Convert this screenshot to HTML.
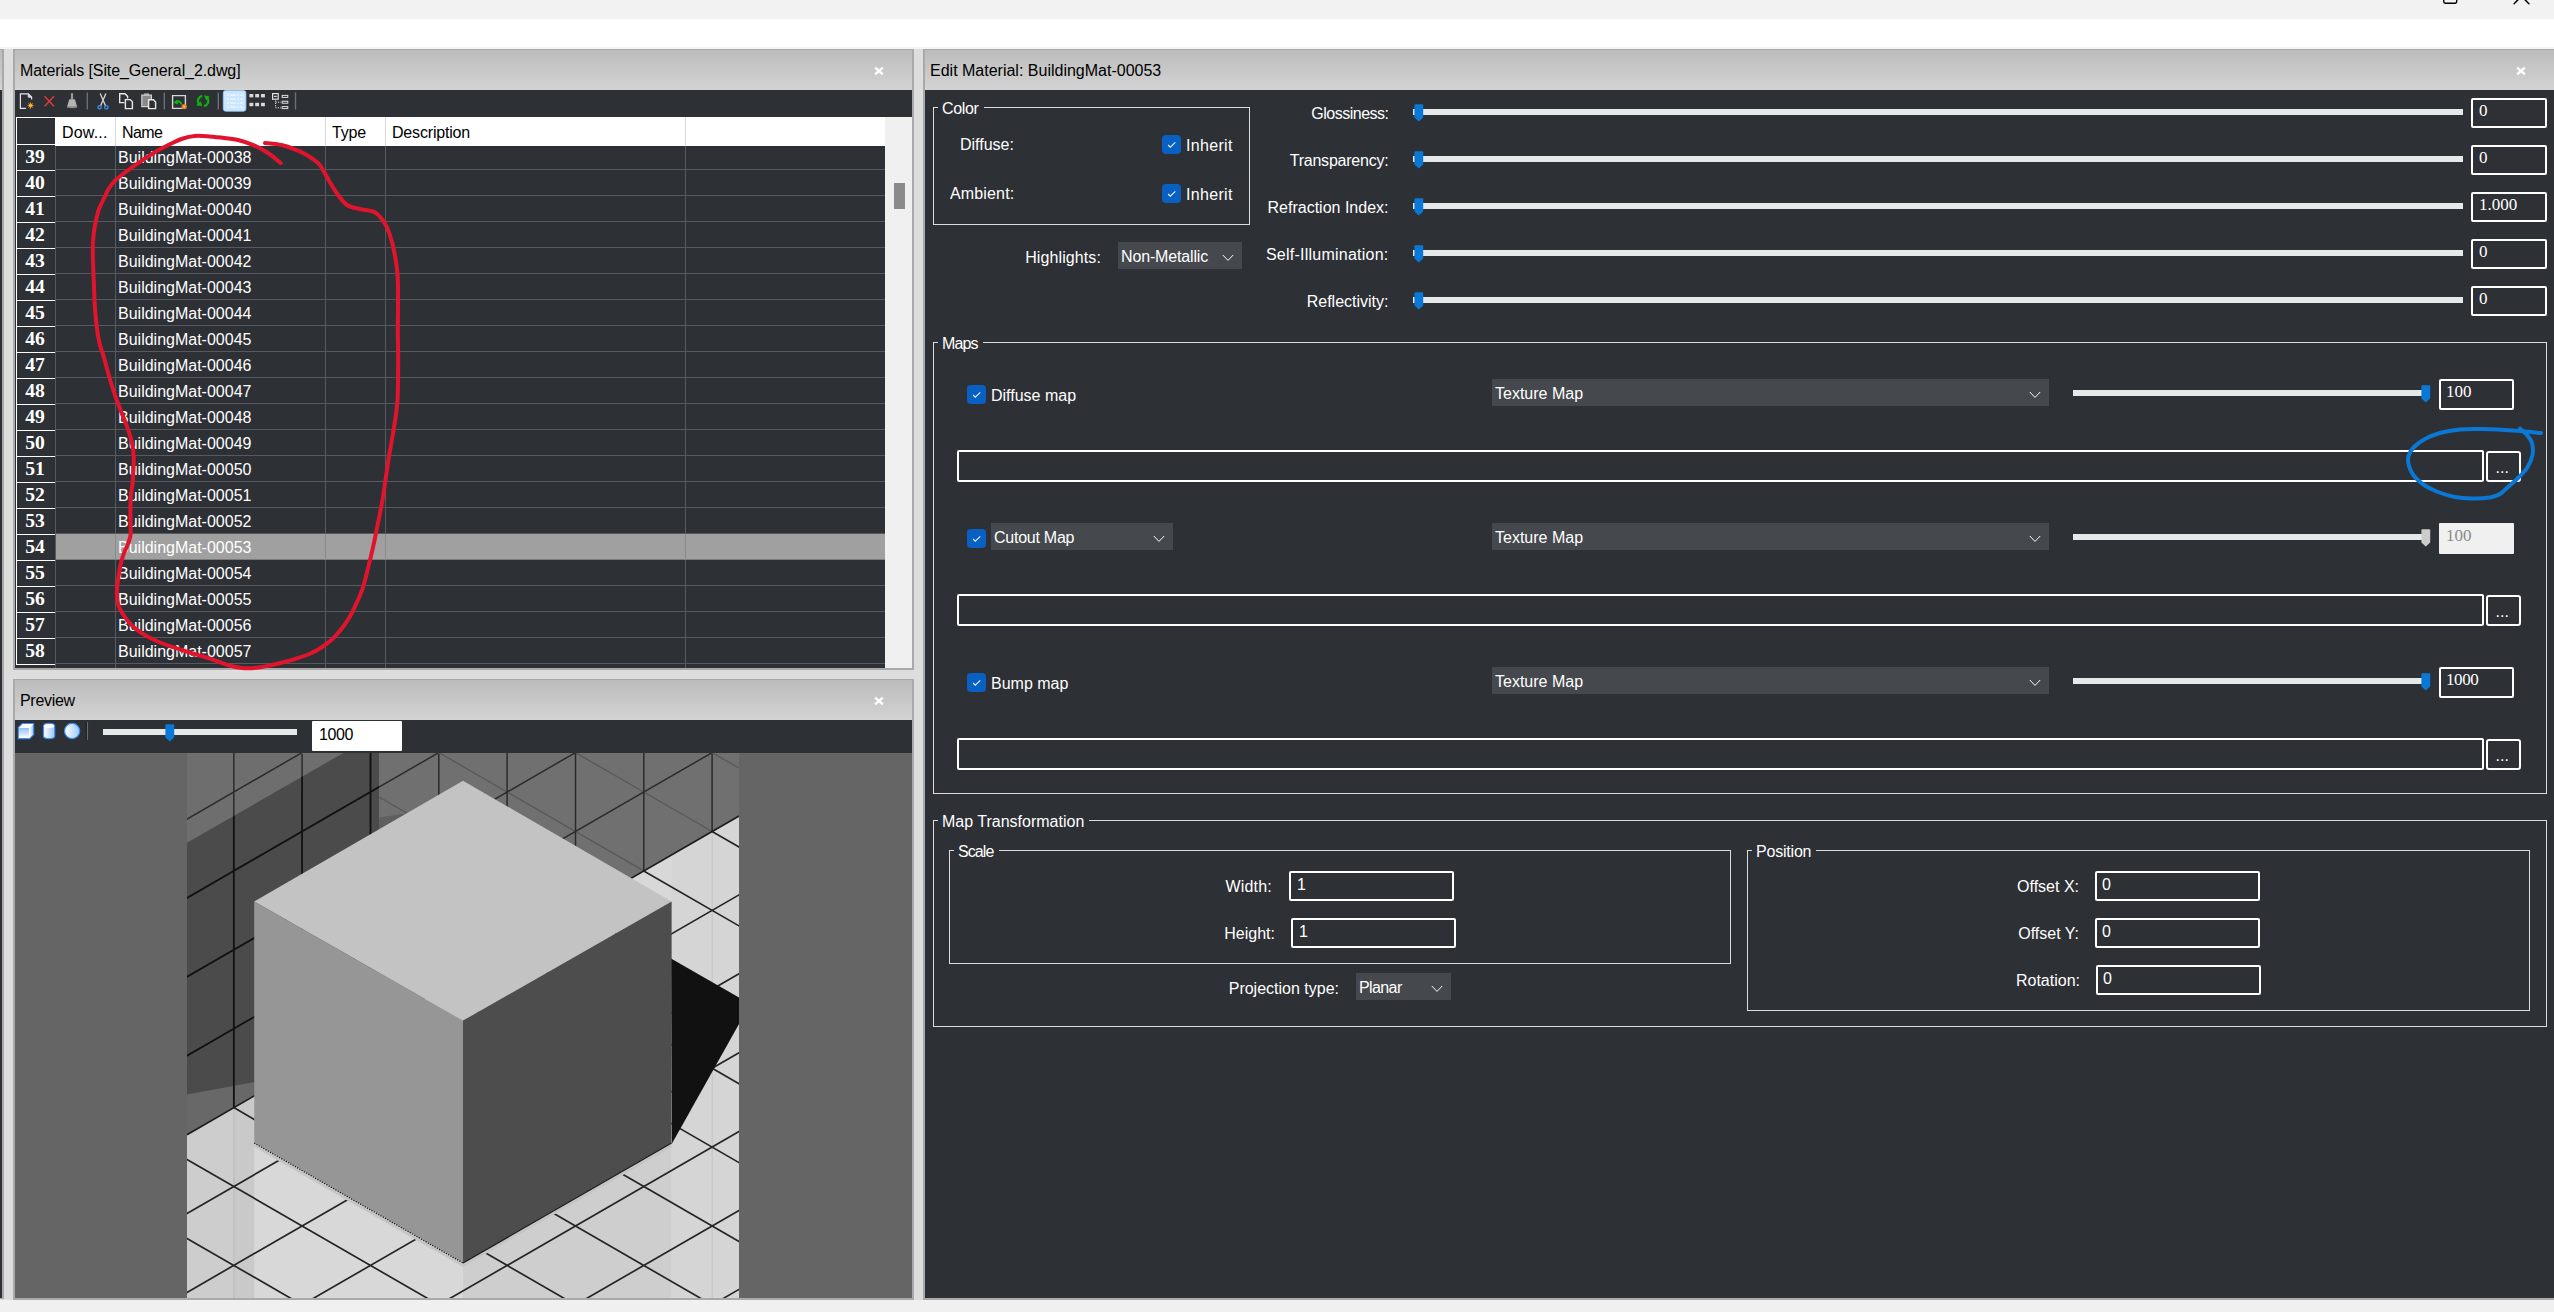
<!DOCTYPE html>
<html lang="en"><head><meta charset="utf-8"><title>Edit Material</title>
<style>
html,body{margin:0;padding:0}
body{width:2554px;height:1312px;position:relative;overflow:hidden;background:#dddddd;font-family:"Liberation Sans",sans-serif;font-size:16px;color:#fff}
div{position:absolute;box-sizing:border-box}
svg{position:absolute;overflow:visible}
.t{white-space:nowrap;line-height:20px;height:20px}
.k{color:#000}
.s{font-family:"Liberation Serif",serif;font-size:17px}
.rn{font-family:"Liberation Serif",serif;font-weight:bold;font-size:18px;transform:scaleX(1.09);text-align:center;white-space:nowrap;line-height:20px;height:20px;width:38px}
.title{background:linear-gradient(#bcbcbc,#d3d3d3)}
.fs{border:1px solid #dcdcdc}
.lg{background:#2d3035;padding:0 5px 0 4px;white-space:nowrap;line-height:20px;height:20px}
.in{border:2px solid #fff;background:#2d3035;border-radius:2px}
.dd{background:#45484d}
.trk{background:#e6e9e9;height:6px}
.cb{background:#0860c2;border-radius:4px;width:19px;height:19px}
</style></head><body>

<div style="left:0px;top:0px;width:2554px;height:19px;background:#f2f2f2"></div>
<div style="left:0px;top:19px;width:2554px;height:29px;background:#fff"></div>
<div style="left:0px;top:47px;width:2554px;height:2px;background:#f4f4f4"></div>
<svg style="left:2440px;top:0" width="100" height="8" viewBox="0 0 100 8"><rect x="3.7" y="-8" width="13" height="11.2" rx="1.6" fill="none" stroke="#000" stroke-width="1.4"/><path d="M81.5 -3.7 L74.1 3.7 M81.5 -3.7 L88.9 3.7" fill="none" stroke="#000" stroke-width="1.5" stroke-linecap="round"/></svg>
<div style="left:0px;top:49px;width:4px;height:1250px;background:#a9a9a9"></div>
<div class="title" style="left:0px;top:50px;width:2px;height:40px;"></div>
<div style="left:0px;top:90px;width:2px;height:1208px;background:#2d3035"></div>
<div style="left:0px;top:1300px;width:2554px;height:12px;background:#f0f0f0"></div>
<div style="left:13px;top:49px;width:901px;height:621px;background:#a9a9a9"></div>
<div class="title" style="left:15px;top:50px;width:897px;height:40px;"></div>
<div class="t k" style="left:20px;top:61px;letter-spacing:-0.09px;">Materials [Site_General_2.dwg]</div>
<svg style="left:874px;top:65.5px" width="10" height="10" viewBox="0 0 10 10"><path d="M1.2 1.6 L8.8 8.4 M8.8 1.6 L1.2 8.4" stroke="#fff" stroke-width="2.3" fill="none"/></svg>
<div style="left:15px;top:90px;width:897px;height:27px;background:#2d3035"></div>
<div style="left:15px;top:117px;width:897px;height:551px;background:#2d3035"></div>
<div style="left:885px;top:117px;width:27px;height:551px;background:#f0f0f0"></div>
<div style="left:894px;top:183px;width:11px;height:26px;background:#8a8a8a"></div>
<svg style="left:15px;top:90px" width="300" height="27" viewBox="15 90 300 27">
<path d="M26 108.3 H20.4 V93.8 H28.4 L31.6 97 V99.6" fill="none" stroke="#dfe3ec" stroke-width="1.2"/><path d="M28.2 94 V97.2 H31.4 Z" fill="#cfd6e6" stroke="#dfe3ec" stroke-width="0.8"/>
<path d="M30.6 101.6 L31.3 104.3 L33.4 102.7 L32 104.9 L34.5 105.5 L32 106.1 L33.4 108.3 L31.3 106.8 L30.6 109.4 L29.9 106.8 L27.8 108.3 L29.2 106.1 L26.7 105.5 L29.2 104.9 L27.8 102.7 L29.9 104.3 Z" fill="#f2b232"/>
<path d="M44.6 96.3 L54 106.3 M54 96.3 L44.6 106.3" stroke="#e03a3a" stroke-width="1.5" fill="none"/>
<path d="M70.9 93.2 h2.2 v6.2 h-2.2 z" fill="#9a9a9a"/><path d="M69.3 99.2 h5.6 l2.3 7.8 q-5 1.6 -10.2 0 z" fill="#b4b4b4"/><path d="M67.2 105.8 q5 1.4 9.8 0 l0.3 1.6 q-5.2 1.6 -10.4 0 z" fill="#8a8a8a"/>
<path d="M87.3 92.5 V109.6" stroke="#6c6f74" stroke-width="1.4"/>
<path d="M164.3 92.5 V109.6" stroke="#6c6f74" stroke-width="1.4"/>
<path d="M218.3 92.5 V109.6" stroke="#6c6f74" stroke-width="1.4"/>
<path d="M295.5 92.5 V109.6" stroke="#6c6f74" stroke-width="1.4"/>
<path d="M100.2 93.6 L105.6 106 M105.9 93.6 L100.5 106" stroke="#d8d8d8" stroke-width="1.3" fill="none"/><circle cx="99.6" cy="107.3" r="1.7" fill="none" stroke="#3b8cf0" stroke-width="1.3"/><circle cx="106.4" cy="107.3" r="1.7" fill="none" stroke="#3b8cf0" stroke-width="1.3"/>
<path d="M124.4 102.6 H119.7 V93.8 H125 L127.6 96.4 V98.6" fill="none" stroke="#e8e8e8" stroke-width="1.4"/><path d="M125.4 99.6 H130.2 L132.4 101.8 V108.6 H125.4 Z" fill="none" stroke="#e8e8e8" stroke-width="1.4"/>
<path d="M141.8 95.2 H151.4 V106.6 H141.8 Z" fill="#8a8a8a" stroke="#d0d0d0" stroke-width="1.2"/><path d="M144.2 93.4 h4.8 v2.6 h-4.8 z" fill="#bdbdbd"/><path d="M148.6 99.8 H153.4 L155.6 102 V108.6 H148.6 Z" fill="#2d3035" stroke="#e8e8e8" stroke-width="1.4"/>
<path d="M172.6 95.6 H185.4 V108.4 H172.6 Z" fill="none" stroke="#d8d8d8" stroke-width="1.4"/><path d="M181.4 104.6 a3.6 3.6 0 0 0 -6 -2.4" fill="none" stroke="#0cb40c" stroke-width="2"/><path d="M173.2 102.8 l4.6 -3.2 l0.2 5 z" fill="#0cb40c"/><circle cx="184.2" cy="106.6" r="2.7" fill="#e8742a"/><circle cx="184.2" cy="106.6" r="1.1" fill="#ffd84a"/>
<path d="M202.2 95.9 A5.3 5.3 0 0 0 198.8 104" fill="none" stroke="#0cb40c" stroke-width="2.2"/><path d="M204 106.2 A5.3 5.3 0 0 0 207.6 98.2" fill="none" stroke="#0cb40c" stroke-width="2.2"/><path d="M196 105.4 L202.4 106 L200.6 101.2 Z" fill="#0cb40c"/><path d="M204 95.2 L209.6 96.6 L206.4 100.4 Z" fill="#0cb40c"/>
<rect x="223.3" y="90.6" width="22.6" height="20.6" rx="2.4" fill="#cbe6ff" stroke="#9fd0ff" stroke-width="0.8"/>
<path d="M227 95.1 h1.8 M230.2 95.1 h5.6 M237.2 95.1 h1.6 M240.2 95.1 h2.7" stroke="#e6f3ff" stroke-width="1.9"/>
<path d="M227 99.1 h1.8 M230.2 99.1 h5.6 M237.2 99.1 h1.6 M240.2 99.1 h2.7" stroke="#e6f3ff" stroke-width="1.9"/>
<path d="M227 103.1 h1.8 M230.2 103.1 h5.6 M237.2 103.1 h1.6 M240.2 103.1 h2.7" stroke="#e6f3ff" stroke-width="1.9"/>
<path d="M227 107.1 h1.8 M230.2 107.1 h5.6 M237.2 107.1 h1.6 M240.2 107.1 h2.7" stroke="#e6f3ff" stroke-width="1.9"/>
<rect x="249.4" y="94" width="3.9" height="3.4" fill="#d9d9d9"/>
<rect x="255.2" y="94" width="3.9" height="3.4" fill="#d9d9d9"/>
<rect x="261" y="94" width="3.9" height="3.4" fill="#d9d9d9"/>
<rect x="249.4" y="102.8" width="3.9" height="3.4" fill="#d9d9d9"/>
<rect x="255.2" y="102.8" width="3.9" height="3.4" fill="#d9d9d9"/>
<rect x="261" y="102.8" width="3.9" height="3.4" fill="#d9d9d9"/>
<rect x="272.6" y="93.6" width="5.6" height="5.6" fill="none" stroke="#e0e0e0" stroke-width="1.2"/><path d="M274 96.4 h2.8" stroke="#e0e0e0" stroke-width="1.1"/><rect x="282.2" y="95.4" width="5.6" height="2" fill="none" stroke="#e0e0e0" stroke-width="1"/><rect x="282.2" y="101.2" width="5.6" height="2" fill="none" stroke="#e0e0e0" stroke-width="1"/><rect x="282.2" y="106.6" width="5.6" height="2" fill="none" stroke="#e0e0e0" stroke-width="1"/><path d="M275.6 100.4 V107.8 H281 M275.6 102.2 H281" fill="none" stroke="#e0e0e0" stroke-width="1" stroke-dasharray="1.2 1.2"/>
</svg>
<div style="left:55px;top:117px;width:830px;height:29px;background:#fff"></div>
<div style="left:115px;top:117px;width:1px;height:29px;background:#dadada"></div>
<div style="left:325px;top:117px;width:1px;height:29px;background:#dadada"></div>
<div style="left:385px;top:117px;width:1px;height:29px;background:#dadada"></div>
<div style="left:685px;top:117px;width:1px;height:29px;background:#dadada"></div>
<div class="t k" style="left:62px;top:123px;letter-spacing:0.2px;">Dow...</div>
<div class="t k" style="left:122px;top:123px;letter-spacing:-0.6px;">Name</div>
<div class="t k" style="left:332px;top:123px;letter-spacing:-0.2px;">Type</div>
<div class="t k" style="left:392px;top:123px;letter-spacing:-0.18px;">Description</div>
<div style="left:16px;top:117px;width:39px;height:29px;background:#2d3035;border-left:1px solid #fff;border-top:1px solid #fff"></div>
<div style="left:55px;top:169px;width:830px;height:1px;background:#56595d"></div>
<div style="left:16px;top:144px;width:39px;height:26px;background:#2d3035;border-left:1px solid #fff;border-top:1px solid #fff"></div>
<div class="rn" style="left:16px;top:147px">39</div>
<div class="t" style="left:118px;top:148px;">BuildingMat-00038</div>
<div style="left:55px;top:195px;width:830px;height:1px;background:#56595d"></div>
<div style="left:16px;top:170px;width:39px;height:26px;background:#2d3035;border-left:1px solid #fff;border-top:1px solid #fff"></div>
<div class="rn" style="left:16px;top:173px">40</div>
<div class="t" style="left:118px;top:174px;">BuildingMat-00039</div>
<div style="left:55px;top:221px;width:830px;height:1px;background:#56595d"></div>
<div style="left:16px;top:196px;width:39px;height:26px;background:#2d3035;border-left:1px solid #fff;border-top:1px solid #fff"></div>
<div class="rn" style="left:16px;top:199px">41</div>
<div class="t" style="left:118px;top:200px;">BuildingMat-00040</div>
<div style="left:55px;top:247px;width:830px;height:1px;background:#56595d"></div>
<div style="left:16px;top:222px;width:39px;height:26px;background:#2d3035;border-left:1px solid #fff;border-top:1px solid #fff"></div>
<div class="rn" style="left:16px;top:225px">42</div>
<div class="t" style="left:118px;top:226px;">BuildingMat-00041</div>
<div style="left:55px;top:273px;width:830px;height:1px;background:#56595d"></div>
<div style="left:16px;top:248px;width:39px;height:26px;background:#2d3035;border-left:1px solid #fff;border-top:1px solid #fff"></div>
<div class="rn" style="left:16px;top:251px">43</div>
<div class="t" style="left:118px;top:252px;">BuildingMat-00042</div>
<div style="left:55px;top:299px;width:830px;height:1px;background:#56595d"></div>
<div style="left:16px;top:274px;width:39px;height:26px;background:#2d3035;border-left:1px solid #fff;border-top:1px solid #fff"></div>
<div class="rn" style="left:16px;top:277px">44</div>
<div class="t" style="left:118px;top:278px;">BuildingMat-00043</div>
<div style="left:55px;top:325px;width:830px;height:1px;background:#56595d"></div>
<div style="left:16px;top:300px;width:39px;height:26px;background:#2d3035;border-left:1px solid #fff;border-top:1px solid #fff"></div>
<div class="rn" style="left:16px;top:303px">45</div>
<div class="t" style="left:118px;top:304px;">BuildingMat-00044</div>
<div style="left:55px;top:351px;width:830px;height:1px;background:#56595d"></div>
<div style="left:16px;top:326px;width:39px;height:26px;background:#2d3035;border-left:1px solid #fff;border-top:1px solid #fff"></div>
<div class="rn" style="left:16px;top:329px">46</div>
<div class="t" style="left:118px;top:330px;">BuildingMat-00045</div>
<div style="left:55px;top:377px;width:830px;height:1px;background:#56595d"></div>
<div style="left:16px;top:352px;width:39px;height:26px;background:#2d3035;border-left:1px solid #fff;border-top:1px solid #fff"></div>
<div class="rn" style="left:16px;top:355px">47</div>
<div class="t" style="left:118px;top:356px;">BuildingMat-00046</div>
<div style="left:55px;top:403px;width:830px;height:1px;background:#56595d"></div>
<div style="left:16px;top:378px;width:39px;height:26px;background:#2d3035;border-left:1px solid #fff;border-top:1px solid #fff"></div>
<div class="rn" style="left:16px;top:381px">48</div>
<div class="t" style="left:118px;top:382px;">BuildingMat-00047</div>
<div style="left:55px;top:429px;width:830px;height:1px;background:#56595d"></div>
<div style="left:16px;top:404px;width:39px;height:26px;background:#2d3035;border-left:1px solid #fff;border-top:1px solid #fff"></div>
<div class="rn" style="left:16px;top:407px">49</div>
<div class="t" style="left:118px;top:408px;">BuildingMat-00048</div>
<div style="left:55px;top:455px;width:830px;height:1px;background:#56595d"></div>
<div style="left:16px;top:430px;width:39px;height:26px;background:#2d3035;border-left:1px solid #fff;border-top:1px solid #fff"></div>
<div class="rn" style="left:16px;top:433px">50</div>
<div class="t" style="left:118px;top:434px;">BuildingMat-00049</div>
<div style="left:55px;top:481px;width:830px;height:1px;background:#56595d"></div>
<div style="left:16px;top:456px;width:39px;height:26px;background:#2d3035;border-left:1px solid #fff;border-top:1px solid #fff"></div>
<div class="rn" style="left:16px;top:459px">51</div>
<div class="t" style="left:118px;top:460px;">BuildingMat-00050</div>
<div style="left:55px;top:507px;width:830px;height:1px;background:#56595d"></div>
<div style="left:16px;top:482px;width:39px;height:26px;background:#2d3035;border-left:1px solid #fff;border-top:1px solid #fff"></div>
<div class="rn" style="left:16px;top:485px">52</div>
<div class="t" style="left:118px;top:486px;">BuildingMat-00051</div>
<div style="left:55px;top:533px;width:830px;height:1px;background:#56595d"></div>
<div style="left:16px;top:508px;width:39px;height:26px;background:#2d3035;border-left:1px solid #fff;border-top:1px solid #fff"></div>
<div class="rn" style="left:16px;top:511px">53</div>
<div class="t" style="left:118px;top:512px;">BuildingMat-00052</div>
<div style="left:55px;top:534px;width:830px;height:26px;background:#a0a0a0"></div>
<div style="left:55px;top:559px;width:830px;height:1px;background:#7b7b7b"></div>
<div style="left:16px;top:534px;width:39px;height:26px;background:#2d3035;border-left:1px solid #fff;border-top:1px solid #fff"></div>
<div class="rn" style="left:16px;top:537px">54</div>
<div class="t" style="left:118px;top:538px;">BuildingMat-00053</div>
<div style="left:55px;top:585px;width:830px;height:1px;background:#56595d"></div>
<div style="left:16px;top:560px;width:39px;height:26px;background:#2d3035;border-left:1px solid #fff;border-top:1px solid #fff"></div>
<div class="rn" style="left:16px;top:563px">55</div>
<div class="t" style="left:118px;top:564px;">BuildingMat-00054</div>
<div style="left:55px;top:611px;width:830px;height:1px;background:#56595d"></div>
<div style="left:16px;top:586px;width:39px;height:26px;background:#2d3035;border-left:1px solid #fff;border-top:1px solid #fff"></div>
<div class="rn" style="left:16px;top:589px">56</div>
<div class="t" style="left:118px;top:590px;">BuildingMat-00055</div>
<div style="left:55px;top:637px;width:830px;height:1px;background:#56595d"></div>
<div style="left:16px;top:612px;width:39px;height:26px;background:#2d3035;border-left:1px solid #fff;border-top:1px solid #fff"></div>
<div class="rn" style="left:16px;top:615px">57</div>
<div class="t" style="left:118px;top:616px;">BuildingMat-00056</div>
<div style="left:55px;top:663px;width:830px;height:1px;background:#56595d"></div>
<div style="left:16px;top:638px;width:39px;height:26px;background:#2d3035;border-left:1px solid #fff;border-top:1px solid #fff"></div>
<div class="rn" style="left:16px;top:641px">58</div>
<div class="t" style="left:118px;top:642px;">BuildingMat-00057</div>
<div style="left:16px;top:664px;width:39px;height:1px;background:#fff"></div>
<div style="left:55px;top:146px;width:1px;height:522px;background:#56595d"></div>
<div style="left:115px;top:146px;width:1px;height:522px;background:#56595d"></div>
<div style="left:325px;top:146px;width:1px;height:522px;background:#56595d"></div>
<div style="left:385px;top:146px;width:1px;height:522px;background:#56595d"></div>
<div style="left:685px;top:146px;width:1px;height:522px;background:#56595d"></div>
<div style="left:115px;top:534px;width:1px;height:26px;background:#8c8c8c"></div>
<div style="left:325px;top:534px;width:1px;height:26px;background:#8c8c8c"></div>
<div style="left:385px;top:534px;width:1px;height:26px;background:#8c8c8c"></div>
<div style="left:685px;top:534px;width:1px;height:26px;background:#8c8c8c"></div>
<svg style="left:0;top:0" width="920" height="680" viewBox="0 0 920 680"><path d="M280.7 163 C278.6 161.3 272.4 155.9 268 153 C263.6 150.1 259.0 147.6 254 145.4 C249.0 143.2 243.5 141.3 238 140 C232.5 138.7 226.2 138.2 221 137.6 C215.8 137.0 211.4 136.5 207 136.2 C202.6 135.9 198.5 135.6 194.5 136 C190.5 136.4 186.7 137.3 183 138.5 C179.3 139.7 176.7 140.9 172.4 143 C168.1 145.1 162.2 148.0 157 151 C151.8 154.0 146.5 157.5 141.5 160.8 C136.5 164.1 131.4 167.7 127 171 C122.6 174.3 118.1 177.7 115 180.7 C111.9 183.7 110.3 186.1 108.5 189 C106.7 191.9 105.6 195.1 104 198.4 C102.4 201.7 100.3 205.3 99 209 C97.7 212.7 96.9 216.5 96 220.5 C95.1 224.5 94.3 228.6 93.8 233 C93.3 237.4 92.9 241.3 92.8 247 C92.7 252.7 93.0 260.4 93.2 267 C93.4 273.6 93.7 279.8 94 286.8 C94.3 293.8 94.5 301.6 95 309 C95.5 316.4 96.5 325.0 97.3 331 C98.1 337.0 98.9 340.6 100 345 C101.1 349.4 102.5 352.4 104 357.6 C105.5 362.8 107.2 369.8 109 376 C110.8 382.2 113.1 389.3 115 395 C116.9 400.7 118.3 404.2 120.5 410 C122.7 415.8 126.3 424.3 128.2 429.8 C130.1 435.3 131.1 438.6 132 443 C132.9 447.4 133.5 451.8 133.7 456.3 C133.9 460.8 133.6 465.6 133.4 470 C133.2 474.4 133.0 478.1 132.6 482.8 C132.2 487.5 131.2 492.8 130.8 498 C130.4 503.2 130.4 509.1 130.4 513.8 C130.4 518.5 130.6 522.3 130.6 526 C130.6 529.7 130.9 532.7 130.4 535.9 C129.9 539.1 128.6 542.0 127.5 545 C126.4 548.0 125.0 550.3 123.8 553.6 C122.6 556.9 121.4 561.0 120.5 565 C119.6 569.0 118.9 573.9 118.3 577.9 C117.7 581.9 117.2 585.3 117 589 C116.8 592.7 116.8 596.8 117.2 600 C117.6 603.2 118.4 605.4 119.5 608 C120.6 610.6 122.1 613.0 123.8 615.5 C125.5 618.0 127.3 620.6 129.5 623 C131.7 625.4 134.1 627.6 137 629.8 C139.9 632.0 143.3 634.2 147 636.2 C150.7 638.2 154.7 640.2 159 642 C163.3 643.8 168.2 645.5 173 647.2 C177.8 648.9 183.6 650.6 187.9 652 C192.2 653.4 195.3 654.2 199 655.3 C202.7 656.4 206.3 657.4 210 658.6 C213.7 659.8 217.3 661.3 221 662.6 C224.7 663.9 228.5 665.4 232 666.3 C235.5 667.2 238.7 667.7 242 668 C245.3 668.3 248.3 668.4 252 668.2 C255.7 668.0 259.9 667.3 264 666.6 C268.1 665.9 271.5 665.2 276.3 664 C281.1 662.8 287.5 661.3 293 659.6 C298.5 657.9 304.8 656.0 309.5 654 C314.2 652.0 317.3 650.2 321 647.8 C324.7 645.4 328.3 642.8 331.6 639.8 C334.9 636.8 338.1 633.3 341 629.6 C343.9 625.9 346.6 622.0 349.2 617.7 C351.8 613.4 354.1 608.4 356.3 603.6 C358.5 598.8 360.5 595.0 362.5 588.9 C364.5 582.8 366.4 574.4 368.3 567 C370.2 559.6 372.0 552.2 373.6 544.7 C375.2 537.2 376.7 529.4 378.2 522 C379.7 514.6 381.1 507.8 382.4 500.5 C383.7 493.2 384.7 485.4 385.8 478 C386.9 470.6 387.9 463.3 389 456.3 C390.1 449.3 391.5 442.6 392.6 436 C393.7 429.4 394.9 422.0 395.7 416.5 C396.5 411.0 396.9 407.4 397.3 403 C397.7 398.6 397.8 397.2 397.9 390 C398.0 382.8 398.2 369.8 398.2 360 C398.2 350.2 397.8 339.5 397.8 331 C397.8 322.5 398.0 316.3 398 309 C398.0 301.7 398.1 293.0 398 287 C397.9 281.0 397.8 277.5 397.4 273 C397.0 268.5 396.6 265.2 395.7 260 C394.8 254.8 393.5 247.5 392 242 C390.5 236.5 388.6 231.0 386.8 227 C385.0 223.0 383.2 220.6 381 218 C378.8 215.4 377.0 213.2 373.5 211.7 C370.0 210.2 364.4 210.1 360 209 C355.6 207.9 350.8 207.6 347 205 C343.2 202.4 340.0 197.6 337 193.5 C334.0 189.4 331.2 184.4 329 180.7 C326.8 176.9 325.3 173.9 323.5 171 C321.7 168.1 321.4 166.0 318 163 C314.6 160.0 308.2 155.8 303 153 C297.8 150.2 291.5 148.0 287 146.5 C282.5 145.0 279.7 144.6 276 144 C272.3 143.4 266.8 143.2 265 143" fill="none" stroke="#e2142d" stroke-width="4" stroke-linecap="round" stroke-linejoin="round"/></svg>
<div style="left:13px;top:679px;width:901px;height:621px;background:#a9a9a9"></div>
<div class="title" style="left:15px;top:680px;width:897px;height:40px;"></div>
<div class="t k" style="left:20px;top:691px;letter-spacing:-0.3px;">Preview</div>
<svg style="left:874px;top:695.5px" width="10" height="10" viewBox="0 0 10 10"><path d="M1.2 1.6 L8.8 8.4 M8.8 1.6 L1.2 8.4" stroke="#fff" stroke-width="2.3" fill="none"/></svg>
<div style="left:15px;top:720px;width:897px;height:33px;background:#2d3035"></div>
<svg style="left:15px;top:720px" width="90" height="33" viewBox="15 720 90 33"><defs><linearGradient id="g1" x1="0" y1="0" x2="0" y2="1"><stop offset="0" stop-color="#8fc0ff"/><stop offset="1" stop-color="#ffffff"/></linearGradient><linearGradient id="g2" x1="0" y1="0" x2="1" y2="0"><stop offset="0" stop-color="#ffffff"/><stop offset="1" stop-color="#9cc8ff"/></linearGradient></defs><path d="M18.4 727.4 L22.4 723.5 H33.6 V734.6 L29.6 738.6 H18.4 Z" fill="#fff" stroke="#3d8ef5" stroke-width="1.2"/><path d="M18.9 728 H29.2 V738 H18.9 Z" fill="url(#g1)"/><path d="M29.8 727.6 L33 724.6 V734.4 L29.8 737.6 Z" fill="url(#g2)"/><path d="M43.5 726 a5.6 2.6 0 0 1 11.2 0 V736 a5.6 2.6 0 0 1 -11.2 0 Z" fill="url(#g2)" stroke="#3d8ef5" stroke-width="1.2"/><ellipse cx="49.1" cy="726" rx="5" ry="2" fill="#fff"/><circle cx="72.1" cy="731" r="7.6" fill="url(#g2)" stroke="#3d8ef5" stroke-width="1.2"/><path d="M86.4 722 V740" stroke="#1f2125" stroke-width="1"/><path d="M87.5 722 V740" stroke="#686b70" stroke-width="1.1"/></svg>
<div class="trk" style="left:103px;top:729px;width:194px;height:6px;"></div>
<svg style="left:165px;top:724px" width="10" height="18" viewBox="0 0 10 18"><path d="M0.4 1.2 Q0.4 0.2 1.4 0.2 H8.2 Q9.2 0.2 9.2 1.2 V13.4 L4.8 17.4 L0.4 13.4 Z" fill="#0a78d7"/></svg>
<div style="left:312px;top:721px;width:90px;height:30px;background:#fff;border-radius:1px"></div>
<div class="t k" style="left:319px;top:725px;letter-spacing:-0.4px;">1000</div>
<div style="left:15px;top:753px;width:897px;height:545px;background:#656565"></div>
<svg style="left:187px;top:753px" width="552" height="545" viewBox="187 753 552 545">
<defs><clipPath id="cw"><path d="M187 753 H739 V816.0 L187 1134.7 Z"/></clipPath><clipPath id="cwr"><path d="M379 753 H739 V816.0 L379 1023.8 Z"/></clipPath><clipPath id="cws"><path d="M343.3 753 H379 V1200 H187 V842.8 Z"/></clipPath><clipPath id="cf"><path d="M187 1134.7 L739 816.0 V1298 H187 Z"/></clipPath><clipPath id="call"><rect x="187" y="753" width="552" height="545"/></clipPath></defs>
<g clip-path="url(#call)">
<rect x="187" y="753" width="552" height="545" fill="#d8d8d8"/>
<g clip-path="url(#cf)">
<rect x="187" y="1000" width="47" height="300" fill="#cdcdcd"/>
<rect x="234" y="1000" width="20.2" height="300" fill="#c9c9c9"/>
<rect x="463" y="1000" width="208.5" height="300" fill="#cecece"/>
<rect x="671.5" y="800" width="68" height="500" fill="#d5d5d5"/>
<path d="M712.2 800 V1300" stroke="#c6c6c6" stroke-width="1.2"/>
<path d="M234 1100 V1300" stroke="#bdbdbd" stroke-width="1.2"/>
<path d="M182 1216.4 L744 892.0 M182 1295.3 L744 970.9 M182 1374.2 L744 1049.8 M182 1453.1 L744 1128.7 M182 1532.0 L744 1207.6 M182 1610.9 L744 1286.5 M182 1689.8 L744 1365.4 M-722.8 1659.9 L177.2 2179.6 M-654.5 1620.5 L245.5 2140.1 M-586.2 1581.0 L313.8 2100.7 M-517.8 1541.6 L382.2 2061.2 M-449.5 1502.1 L450.5 2021.8 M-381.2 1462.7 L518.8 1982.3 M-312.8 1423.2 L587.2 1942.9 M-244.5 1383.8 L655.5 1903.4 M-176.2 1344.3 L723.8 1864.0 M-107.8 1304.9 L792.2 1824.5 M-39.5 1265.4 L860.5 1785.1 M28.8 1226.0 L928.8 1745.6 M97.1 1186.5 L997.1 1706.2 M165.5 1147.1 L1065.5 1666.7 M233.8 1107.6 L1133.8 1627.3 M302.1 1068.2 L1202.1 1587.8 M370.5 1028.7 L1270.5 1548.4 M438.8 989.3 L1338.8 1508.9 M507.1 949.8 L1407.1 1469.5 M575.5 910.4 L1475.5 1430.0 M643.8 870.9 L1543.8 1390.6 M712.1 831.5 L1612.1 1351.1 M780.4 792.0 L1680.4 1311.7" stroke="#252525" stroke-width="1.7" fill="none"/>
</g>
<g clip-path="url(#cw)">
<rect x="187" y="753" width="192" height="400" fill="#4b4b4b"/>
<rect x="379" y="753" width="360" height="400" fill="#707070"/>
<path d="M187 753 H343.3 L187 842.8 Z" fill="#6e6e6e"/>
<path d="M187 1094.5 L254.5 1082 V1110 L187 1140 Z" fill="#686868"/>
<path d="M379 817.6 L405.5 813.4 L408 814 L379 831 Z" fill="#5f5f5f"/>
<g clip-path="url(#cwr)">
<path d="M-176.2 1344.3 L-1076.2 824.7 M-107.8 1304.9 L-1007.8 785.3 M-39.5 1265.4 L-939.5 745.8 M28.8 1226.0 L-871.2 706.4 M97.1 1186.5 L-802.9 666.9 M165.5 1147.1 L-734.5 627.5 M233.8 1107.6 L-666.2 588.0 M302.1 1068.2 L-597.9 548.6 M370.5 1028.7 L-529.5 509.1 M438.8 989.3 L-461.2 469.7 M507.1 949.8 L-392.9 430.2 M575.5 910.4 L-324.5 390.8 M643.8 870.9 L-256.2 351.3 M712.1 831.5 L-187.9 311.9 M780.4 792.0 L-119.6 272.4" stroke="#585858" stroke-width="1.3" fill="none"/>
</g>
<path d="M233.8 753 V1107.6 M302.1 753 V1068.2 M370.5 753 V1028.7 M438.8 753 V989.3 M507.1 753 V949.8 M575.5 753 V910.4 M643.8 753 V870.9 M712.1 753 V831.5 M780.4 753 V792.0 M182 1058.6 L744 734.2 M182 979.7 L744 655.3 M182 900.8 L744 576.4 M182 821.9 L744 497.5 M182 743.0 L744 418.6 M182 664.1 L744 339.7 M182 585.2 L744 260.8 M182 506.3 L744 181.9 M182 427.4 L744 103.0" stroke="#2b2b2b" stroke-width="1.5" fill="none"/>
<g clip-path="url(#cws)"><path d="M233.8 753 V1107.6 M302.1 753 V1068.2 M370.5 753 V1028.7 M438.8 753 V989.3 M507.1 753 V949.8 M575.5 753 V910.4 M643.8 753 V870.9 M712.1 753 V831.5 M780.4 753 V792.0 M182 1058.6 L744 734.2 M182 979.7 L744 655.3 M182 900.8 L744 576.4 M182 821.9 L744 497.5 M182 743.0 L744 418.6 M182 664.1 L744 339.7 M182 585.2 L744 260.8 M182 506.3 L744 181.9 M182 427.4 L744 103.0" stroke="#121212" stroke-width="1.7" fill="none"/></g>
</g>
<path d="M187 1134.7 L739 816.0" stroke="#1c1c1c" stroke-width="1.7"/>
<path d="M671 958.4 L739 997.5 V1024 L672 1143.6 Z" fill="#111111"/>
<g transform="translate(0,-0.6)">
<path d="M463 781.4 L671.6 902.2 L463 1021.2 L254.2 902.2 Z" fill="#c3c3c3"/>
<path d="M254.2 902.2 L463 1021.2 V1263.4 L254.2 1143.4 Z" fill="#969696"/>
<path d="M463 1021.2 L671.6 902.2 V1143.4 L463 1263.4 Z" fill="#4d4d4d"/>
<path d="M254.2 1143.4 L463 1263.4 L671.6 1143.4 V1147.6 L463 1267.6 L254.2 1147.6 Z" fill="#c5c5c5"/>
<path d="M254.2 1143.6 L463 1263.6" stroke="#151515" stroke-width="1.2" stroke-dasharray="1.3 1.3" fill="none"/>
<path d="M463 1263.6 L671.6 1143.6" stroke="#151515" stroke-width="1.2" fill="none"/>
</g>
</g></svg>
<div style="left:923px;top:49px;width:1640px;height:1251px;background:#a9a9a9"></div>
<div class="title" style="left:925px;top:50px;width:1640px;height:40px;"></div>
<div class="t k" style="left:930px;top:61px;">Edit Material: BuildingMat-00053</div>
<svg style="left:2516px;top:65.5px" width="10" height="10" viewBox="0 0 10 10"><path d="M1.2 1.6 L8.8 8.4 M8.8 1.6 L1.2 8.4" stroke="#fff" stroke-width="2.3" fill="none"/></svg>
<div style="left:925px;top:90px;width:1640px;height:1208px;background:#2d3035"></div>
<div class="fs" style="left:933px;top:107px;width:317px;height:118px;"></div>
<div class="lg" style="left:938px;top:99px;letter-spacing:-0.35px;">Color</div>
<div class="t" style="left:960px;top:135px;">Diffuse:</div>
<div class="t" style="left:950px;top:184px;letter-spacing:0.15px;">Ambient:</div>
<div class="cb" style="left:1162px;top:135px"></div>
<svg style="left:1162px;top:135px" width="19" height="19" viewBox="0 0 19 19"><path d="M6.1 10 L8.3 12.2 L13.3 7.4" fill="none" stroke="#e8f1fb" stroke-width="1.1"/></svg>
<div class="t" style="left:1186px;top:136px;letter-spacing:0.33px;">Inherit</div>
<div class="cb" style="left:1162px;top:184px"></div>
<svg style="left:1162px;top:184px" width="19" height="19" viewBox="0 0 19 19"><path d="M6.1 10 L8.3 12.2 L13.3 7.4" fill="none" stroke="#e8f1fb" stroke-width="1.1"/></svg>
<div class="t" style="left:1186px;top:185px;letter-spacing:0.33px;">Inherit</div>
<div class="t" style="right:1453px;top:248px;letter-spacing:0.1px;">Highlights:</div>
<div class="dd" style="left:1118px;top:242px;width:124px;height:27px;"></div>
<div class="t" style="left:1121px;top:247.0px;letter-spacing:-0.15px;">Non-Metallic</div>
<svg style="left:1222px;top:254.0px" width="12" height="8" viewBox="0 0 12 8"><path d="M0.8 1 L6 6.4 L11.2 1" fill="none" stroke="#fff" stroke-width="1"/></svg>
<div class="t" style="right:1165.5px;top:104px;letter-spacing:-0.5px;">Glossiness:</div>
<div class="trk" style="left:1413px;top:109px;width:1050px;height:6px;"></div>
<svg style="left:1413.5px;top:104px" width="10" height="18" viewBox="0 0 10 18"><path d="M0.4 1.2 Q0.4 0.2 1.4 0.2 H8.2 Q9.2 0.2 9.2 1.2 V13.4 L4.8 17.4 L0.4 13.4 Z" fill="#0a78d7"/></svg>
<div class="in" style="left:2471px;top:98px;width:76px;height:30px;"></div>
<div class="t s" style="left:2479px;top:101.3px;">0</div>
<div class="t" style="right:1165.5px;top:151px;letter-spacing:-0.22px;">Transparency:</div>
<div class="trk" style="left:1413px;top:156px;width:1050px;height:6px;"></div>
<svg style="left:1413.5px;top:151px" width="10" height="18" viewBox="0 0 10 18"><path d="M0.4 1.2 Q0.4 0.2 1.4 0.2 H8.2 Q9.2 0.2 9.2 1.2 V13.4 L4.8 17.4 L0.4 13.4 Z" fill="#0a78d7"/></svg>
<div class="in" style="left:2471px;top:145px;width:76px;height:30px;"></div>
<div class="t s" style="left:2479px;top:148.3px;">0</div>
<div class="t" style="right:1165.5px;top:198px;">Refraction Index:</div>
<div class="trk" style="left:1413px;top:203px;width:1050px;height:6px;"></div>
<svg style="left:1413.5px;top:198px" width="10" height="18" viewBox="0 0 10 18"><path d="M0.4 1.2 Q0.4 0.2 1.4 0.2 H8.2 Q9.2 0.2 9.2 1.2 V13.4 L4.8 17.4 L0.4 13.4 Z" fill="#0a78d7"/></svg>
<div class="in" style="left:2471px;top:192px;width:76px;height:30px;"></div>
<div class="t s" style="left:2479px;top:195.3px;">1.000</div>
<div class="t" style="right:1165.5px;top:245px;letter-spacing:0.24px;">Self-Illumination:</div>
<div class="trk" style="left:1413px;top:250px;width:1050px;height:6px;"></div>
<svg style="left:1413.5px;top:245px" width="10" height="18" viewBox="0 0 10 18"><path d="M0.4 1.2 Q0.4 0.2 1.4 0.2 H8.2 Q9.2 0.2 9.2 1.2 V13.4 L4.8 17.4 L0.4 13.4 Z" fill="#0a78d7"/></svg>
<div class="in" style="left:2471px;top:239px;width:76px;height:30px;"></div>
<div class="t s" style="left:2479px;top:242.3px;">0</div>
<div class="t" style="right:1165.5px;top:292px;">Reflectivity:</div>
<div class="trk" style="left:1413px;top:297px;width:1050px;height:6px;"></div>
<svg style="left:1413.5px;top:292px" width="10" height="18" viewBox="0 0 10 18"><path d="M0.4 1.2 Q0.4 0.2 1.4 0.2 H8.2 Q9.2 0.2 9.2 1.2 V13.4 L4.8 17.4 L0.4 13.4 Z" fill="#0a78d7"/></svg>
<div class="in" style="left:2471px;top:286px;width:76px;height:30px;"></div>
<div class="t s" style="left:2479px;top:289.3px;">0</div>
<div class="fs" style="left:933px;top:342px;width:1614px;height:452px;"></div>
<div class="lg" style="left:938px;top:334px;letter-spacing:-0.9px;">Maps</div>
<div class="cb" style="left:967px;top:385px"></div>
<svg style="left:967px;top:385px" width="19" height="19" viewBox="0 0 19 19"><path d="M6.1 10 L8.3 12.2 L13.3 7.4" fill="none" stroke="#e8f1fb" stroke-width="1.1"/></svg>
<div class="t" style="left:991px;top:386px;">Diffuse map</div>
<div class="dd" style="left:1492px;top:379px;width:557px;height:27px;"></div>
<div class="t" style="left:1495px;top:384.0px;">Texture Map</div>
<svg style="left:2029px;top:391.0px" width="12" height="8" viewBox="0 0 12 8"><path d="M0.8 1 L6 6.4 L11.2 1" fill="none" stroke="#fff" stroke-width="1"/></svg>
<div class="trk" style="left:2073px;top:390px;width:356px;height:6px;"></div>
<svg style="left:2421px;top:384.5px" width="10" height="18" viewBox="0 0 10 18"><path d="M0.4 1.2 Q0.4 0.2 1.4 0.2 H8.2 Q9.2 0.2 9.2 1.2 V13.4 L4.8 17.4 L0.4 13.4 Z" fill="#0a78d7"/></svg>
<div class="in" style="left:2439px;top:379px;width:75px;height:31px;"></div>
<div class="t s" style="left:2446px;top:382.3px;">100</div>
<div class="in" style="left:957px;top:450px;width:1527px;height:32px;"></div>
<div style="left:2485.5px;top:451px;width:35px;height:30.5px;border:2px solid #fff;border-radius:3px;background:#2d3035"></div>
<div class="t" style="left:2495.5px;top:458px;">...</div>
<div class="cb" style="left:967px;top:529px"></div>
<svg style="left:967px;top:529px" width="19" height="19" viewBox="0 0 19 19"><path d="M6.1 10 L8.3 12.2 L13.3 7.4" fill="none" stroke="#e8f1fb" stroke-width="1.1"/></svg>
<div class="dd" style="left:991px;top:523px;width:182px;height:27px;"></div>
<div class="t" style="left:994px;top:528.0px;letter-spacing:-0.25px;">Cutout Map</div>
<svg style="left:1153px;top:535.0px" width="12" height="8" viewBox="0 0 12 8"><path d="M0.8 1 L6 6.4 L11.2 1" fill="none" stroke="#fff" stroke-width="1"/></svg>
<div class="dd" style="left:1492px;top:523px;width:557px;height:27px;"></div>
<div class="t" style="left:1495px;top:528.0px;">Texture Map</div>
<svg style="left:2029px;top:535.0px" width="12" height="8" viewBox="0 0 12 8"><path d="M0.8 1 L6 6.4 L11.2 1" fill="none" stroke="#fff" stroke-width="1"/></svg>
<div class="trk" style="left:2073px;top:534px;width:356px;height:6px;"></div>
<svg style="left:2421px;top:528.5px" width="10" height="18" viewBox="0 0 10 18"><path d="M0.4 1.2 Q0.4 0.2 1.4 0.2 H8.2 Q9.2 0.2 9.2 1.2 V13.4 L4.8 17.4 L0.4 13.4 Z" fill="#cccccc"/></svg>
<div style="left:2439px;top:523px;width:75px;height:31px;background:#f0f0f0;border-radius:1px"></div>
<div class="t s" style="left:2446px;top:526.3px;color:#8a8a8a">100</div>
<div class="in" style="left:957px;top:594px;width:1527px;height:32px;"></div>
<div style="left:2485.5px;top:595px;width:35px;height:30.5px;border:2px solid #fff;border-radius:3px;background:#2d3035"></div>
<div class="t" style="left:2495.5px;top:602px;">...</div>
<div class="cb" style="left:967px;top:673px"></div>
<svg style="left:967px;top:673px" width="19" height="19" viewBox="0 0 19 19"><path d="M6.1 10 L8.3 12.2 L13.3 7.4" fill="none" stroke="#e8f1fb" stroke-width="1.1"/></svg>
<div class="t" style="left:991px;top:674px;">Bump map</div>
<div class="dd" style="left:1492px;top:667px;width:557px;height:27px;"></div>
<div class="t" style="left:1495px;top:672.0px;">Texture Map</div>
<svg style="left:2029px;top:679.0px" width="12" height="8" viewBox="0 0 12 8"><path d="M0.8 1 L6 6.4 L11.2 1" fill="none" stroke="#fff" stroke-width="1"/></svg>
<div class="trk" style="left:2073px;top:678px;width:356px;height:6px;"></div>
<svg style="left:2421px;top:672.5px" width="10" height="18" viewBox="0 0 10 18"><path d="M0.4 1.2 Q0.4 0.2 1.4 0.2 H8.2 Q9.2 0.2 9.2 1.2 V13.4 L4.8 17.4 L0.4 13.4 Z" fill="#0a78d7"/></svg>
<div class="in" style="left:2439px;top:667px;width:75px;height:31px;"></div>
<div class="t s" style="left:2446px;top:670.3px;letter-spacing:-0.4px;">1000</div>
<div class="in" style="left:957px;top:738px;width:1527px;height:32px;"></div>
<div style="left:2485.5px;top:739px;width:35px;height:30.5px;border:2px solid #fff;border-radius:3px;background:#2d3035"></div>
<div class="t" style="left:2495.5px;top:746px;">...</div>
<svg style="left:0;top:0" width="2554" height="520" viewBox="0 0 2554 520"><path d="M2541 433 C2538.3 432.8 2531.0 432.0 2525 431.5 C2519.0 431.0 2512.5 430.4 2505 430 C2497.5 429.6 2487.5 429.1 2480 429 C2472.5 428.9 2466.7 428.8 2460 429.5 C2453.3 430.2 2445.8 431.4 2440 433 C2434.2 434.6 2429.3 436.7 2425 439 C2420.7 441.3 2416.8 444.2 2414 447 C2411.2 449.8 2409.3 452.8 2408.5 456 C2407.7 459.2 2408.1 462.7 2409 466 C2409.9 469.3 2411.5 472.8 2414 476 C2416.5 479.2 2420.0 482.3 2424 485 C2428.0 487.7 2432.8 490.0 2438 492 C2443.2 494.0 2449.3 495.9 2455 497 C2460.7 498.1 2466.2 498.4 2472 498.5 C2477.8 498.6 2485.3 498.2 2490 497.5 C2494.7 496.8 2497.0 495.8 2500 494 C2503.0 492.2 2505.2 489.5 2508 487 C2510.8 484.5 2513.8 482.2 2517 479 C2520.2 475.8 2524.4 472.0 2527 468 C2529.6 464.0 2531.7 459.2 2532.5 455 C2533.3 450.8 2532.9 446.3 2532 443 C2531.1 439.7 2529.0 437.4 2527 435 C2525.0 432.6 2521.2 429.6 2520 428.5" fill="none" stroke="#0a78d4" stroke-width="4" stroke-linecap="round" stroke-linejoin="round"/></svg>
<div class="fs" style="left:933px;top:820px;width:1614px;height:207px;"></div>
<div class="lg" style="left:938px;top:812px;">Map Transformation</div>
<div class="fs" style="left:949px;top:850px;width:782px;height:114px;"></div>
<div class="lg" style="left:954px;top:842px;letter-spacing:-0.9px;">Scale</div>
<div class="t" style="right:1282px;top:877px;letter-spacing:0.2px;">Width:</div>
<div class="in" style="left:1289px;top:871px;width:165px;height:30px;"></div>
<div class="t" style="left:1297px;top:875px;">1</div>
<div class="t" style="right:1279px;top:924px;">Height:</div>
<div class="in" style="left:1291px;top:918px;width:165px;height:30px;"></div>
<div class="t" style="left:1299px;top:922px;">1</div>
<div class="t" style="right:1215px;top:979px;">Projection type:</div>
<div class="dd" style="left:1356px;top:973px;width:95px;height:27px;"></div>
<div class="t" style="left:1359px;top:978.0px;letter-spacing:-0.6px;">Planar</div>
<svg style="left:1431px;top:985.0px" width="12" height="8" viewBox="0 0 12 8"><path d="M0.8 1 L6 6.4 L11.2 1" fill="none" stroke="#fff" stroke-width="1"/></svg>
<div class="fs" style="left:1747px;top:850px;width:783px;height:161px;"></div>
<div class="lg" style="left:1752px;top:842px;letter-spacing:-0.2px;">Position</div>
<div class="t" style="right:475px;top:877px;">Offset X:</div>
<div class="in" style="left:2095px;top:871px;width:165px;height:30px;"></div>
<div class="t" style="left:2102px;top:875px;">0</div>
<div class="t" style="right:475px;top:924px;">Offset Y:</div>
<div class="in" style="left:2095px;top:918px;width:165px;height:30px;"></div>
<div class="t" style="left:2102px;top:922px;">0</div>
<div class="t" style="right:474px;top:971px;">Rotation:</div>
<div class="in" style="left:2096px;top:965px;width:165px;height:30px;"></div>
<div class="t" style="left:2103px;top:969px;">0</div>
</body></html>
